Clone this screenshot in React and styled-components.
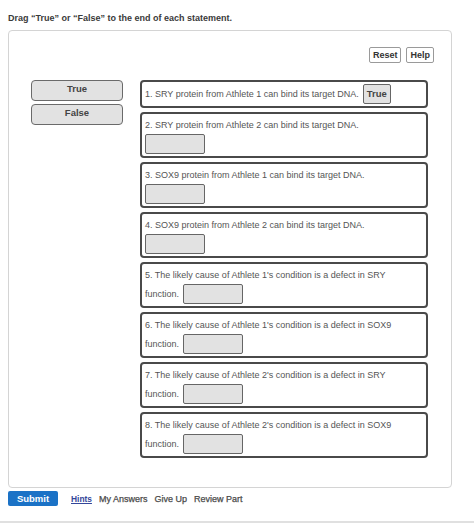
import React from 'react';
import styled, { createGlobalStyle } from 'styled-components';

const GlobalStyle = createGlobalStyle`
    body {
        margin: 0;
        background: #fff;
        font-family: "Liberation Sans", Arial, sans-serif;
    }
`

const statements = [
    { text: '1. SRY protein from Athlete 1 can bind its target DNA.', answer: 'True', inline: true },
    { text: '2. SRY protein from Athlete 2 can bind its target DNA.' },
    { text: '3. SOX9 protein from Athlete 1 can bind its target DNA.' },
    { text: '4. SOX9 protein from Athlete 2 can bind its target DNA.' },
    { text: "5. The likely cause of Athlete 1's condition is a defect in SRY", tail: 'function.' },
    { text: "6. The likely cause of Athlete 1's condition is a defect in SOX9", tail: 'function.' },
    { text: "7. The likely cause of Athlete 2's condition is a defect in SRY", tail: 'function.' },
    { text: "8. The likely cause of Athlete 2's condition is a defect in SOX9", tail: 'function.' },
];

const Statement = ({ item }) => {
    if (item.inline) {
        return (
            <StBox>
                <StLine>
                    {item.text}
                    <StPlaced>{item.answer}</StPlaced>
                </StLine>
            </StBox>
        )
    }
    return (
        <StBox>
            <StLine>{item.text}</StLine>
            {item.tail ? (
                <StTailLine>
                    {item.tail}
                    <StTarget />
                </StTailLine>
            ) : (
                <StTarget />
            )}
        </StBox>
    )
}

const App = () => {
    return (
        <StPage>
            <GlobalStyle />
            <StTitle>Drag “True” or “False” to the end of each statement.</StTitle>
            <StPanel>
                <StToolbar>
                    <StToolButton>Reset</StToolButton>
                    <StToolButton>Help</StToolButton>
                </StToolbar>
                <StBody>
                    <StBank>
                        <StChip>True</StChip>
                        <StChip>False</StChip>
                    </StBank>
                    <StList>
                        {statements.map(item => (
                            <Statement key={item.text} item={item} />
                        ))}
                    </StList>
                </StBody>
            </StPanel>
            <StFooter>
                <StSubmit>Submit</StSubmit>
                <StLinks>
                    <StHint>Hints</StHint>
                    <StLink>My Answers</StLink>
                    <StLink>Give Up</StLink>
                    <StLink>Review Part</StLink>
                </StLinks>
            </StFooter>
            <StRule />
        </StPage>
    );
};

const StPage = styled.div`
    width: 474px;
    height: 527px;
    box-sizing: border-box;
    padding: 12px 0 0 0;
    overflow: hidden;
`

const StTitle = styled.h1`
    margin: 0 0 0 8px;
    font-size: 9px;
    font-weight: bold;
    color: #3a3a3a;
    line-height: 12px;
`

const StPanel = styled.div`
    margin: 6px 0 0 8px;
    width: 444px;
    height: 458px;
    box-sizing: border-box;
    border: 1px solid #d4d4d4;
    border-radius: 4px;
    padding: 16px 23px 0 22px;
`

const StToolbar = styled.div`
    display: flex;
    justify-content: flex-end;
    gap: 5px;
    margin-right: -6px;
`

const StToolButton = styled.button`
    height: 16px;
    padding: 0 3px;
    border: 1px solid #9a9a9a;
    border-radius: 2px;
    background: #fff;
    font-family: "Liberation Sans", Arial, sans-serif;
    font-size: 9px;
    font-weight: bold;
    color: #333;
    line-height: 14px;
`

const StBody = styled.div`
    display: flex;
    gap: 17px;
    margin-top: 17px;
`

const StBank = styled.div`
    display: flex;
    flex-direction: column;
    gap: 3px;
    width: 92px;
    flex-shrink: 0;
`

const StChip = styled.div`
    height: 21px;
    box-sizing: border-box;
    border: 1.5px solid #6a6a6a;
    border-radius: 4px;
    background: #e2e2e2;
    font-size: 9.5px;
    font-weight: bold;
    color: #444;
    text-align: center;
    line-height: 16px;
`

const StList = styled.div`
    display: flex;
    flex-direction: column;
    gap: 4px;
    width: 289px;
`

const StBox = styled.div`
    box-sizing: border-box;
    border: 2px solid #4a4a4a;
    border-radius: 4px;
    padding: 2px 3px;
    font-size: 9px;
    color: #555;
    min-height: 28px;
`

const StLine = styled.div`
    display: flex;
    align-items: center;
    gap: 4px;
    min-height: 18px;
    line-height: 18px;
`

const StTailLine = styled.div`
    display: flex;
    align-items: center;
    gap: 4px;
    height: 20px;
`

const StTarget = styled.div`
    width: 60px;
    height: 20px;
    box-sizing: border-box;
    border: 1.5px solid #666;
    border-radius: 2px;
    background: #e2e2e2;
`

const StPlaced = styled.div`
    height: 20px;
    box-sizing: border-box;
    padding: 0 3px;
    border: 1.5px solid #666;
    border-radius: 2px;
    background: #e2e2e2;
    font-size: 9.5px;
    font-weight: bold;
    color: #444;
    line-height: 17px;
`

const StFooter = styled.div`
    display: flex;
    align-items: center;
    gap: 13px;
    margin: 3px 0 0 8px;
`

const StSubmit = styled.button`
    width: 50px;
    height: 15px;
    padding: 0;
    border: none;
    border-radius: 2px;
    background: #1b72c6;
    color: #fff;
    font-family: "Liberation Sans", Arial, sans-serif;
    font-size: 9.5px;
    font-weight: bold;
`

const StLinks = styled.div`
    display: flex;
    gap: 7px;
    font-size: 9px;
`

const StHint = styled.span`
    color: #34479a;
    text-decoration: underline;
    font-weight: bold;
    font-size: 8.4px;
`

const StLink = styled.span`
    color: #4a4a4a;
    -webkit-text-stroke: 0.25px #4a4a4a;
`

const StRule = styled.div`
    margin-top: 15px;
    height: 2px;
    background: #e0e0e0;
`

export default App;
